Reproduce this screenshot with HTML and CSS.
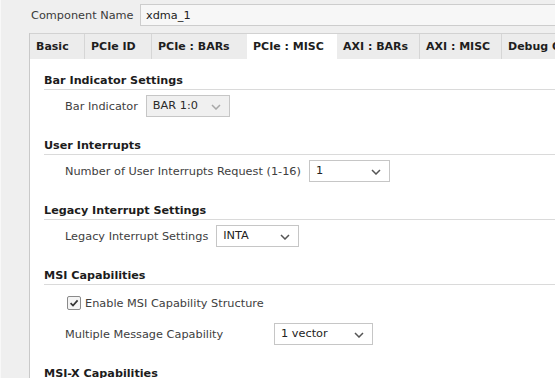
FILE: index.html
```html
<!DOCTYPE html>
<html>

<head>
    <title>xdma_1</title>
    <meta charset="utf-8" />
    <link rel="stylesheet" href="styles.css">
</head>

<body>

    <div class="nameRow">
        <label for="compName">Component Name</label>
        <input id="compName" type="text" value="xdma_1" />
    </div>

    <div class="tabContainer">
        <div class="tabBar">
            <div class="tab t1">Basic</div>
            <div class="tab t2">PCIe ID</div>
            <div class="tab t3">PCIe : BARs</div>
            <div class="tab t4 active">PCIe : MISC</div>
            <div class="tab t5">AXI : BARs</div>
            <div class="tab t6">AXI : MISC</div>
            <div class="tab t7">Debug Options</div>
        </div>

        <div class="panel">
            <div class="section">
                <div class="heading">Bar Indicator Settings</div>
                <div class="row">
                    <span class="label">Bar Indicator</span>
                    <div class="combo disabled w84">BAR 1:0<svg class="chev" width="10" height="6" viewBox="0 0 10 6"><path d="M1 1 L5 5 L9 1" /></svg></div>
                </div>
            </div>

            <div class="section">
                <div class="heading">User Interrupts</div>
                <div class="row">
                    <span class="label">Number of User Interrupts Request (1-16)</span>
                    <div class="combo w81">1<svg class="chev" width="10" height="6" viewBox="0 0 10 6"><path d="M1 1 L5 5 L9 1" /></svg></div>
                </div>
            </div>

            <div class="section">
                <div class="heading">Legacy Interrupt Settings</div>
                <div class="row">
                    <span class="label">Legacy Interrupt Settings</span>
                    <div class="combo w83">INTA<svg class="chev" width="10" height="6" viewBox="0 0 10 6"><path d="M1 1 L5 5 L9 1" /></svg></div>
                </div>
            </div>

            <div class="section">
                <div class="heading">MSI Capabilities</div>
                <div class="row check">
                    <span class="box">
                        <svg width="12" height="12" viewBox="0 0 12 12">
                            <path d="M2.6 6.2 L5 8.6 L9.6 3.4" fill="none" stroke="#333" stroke-width="1.7" />
                        </svg>
                    </span>
                    <span class="label">Enable MSI Capability Structure</span>
                </div>
                <div class="row">
                    <span class="label wide">Multiple Message Capability</span>
                    <div class="combo w99">1 vector<svg class="chev" width="10" height="6" viewBox="0 0 10 6"><path d="M1 1 L5 5 L9 1" /></svg></div>
                </div>
            </div>

            <div class="section">
                <div class="heading">MSI-X Capabilities</div>
            </div>
        </div>
    </div>

</body>

</html>
```

FILE: styles.css
```css
body {
    margin: 0;
    background-color: #efefef;
    font-family: "DejaVu Sans", sans-serif;
    font-size: 11.3px;
    color: #404040;
    width: 555px;
    height: 378px;
    overflow: hidden;
    border-left: 1px solid #f8f8f8;
    box-sizing: border-box;
}

div.nameRow {
    display: flex;
    align-items: center;
    height: 22px;
    padding: 4px 0 0 30px;
}

div.nameRow label {
    width: 109px;
    color: #3a3a3a;
}

div.nameRow input {
    flex: 1;
    height: 22px;
    box-sizing: border-box;
    margin: 0;
    padding: 0 5px;
    border: 1px solid #cdcdcd;
    border-right: none;
    background-color: #f7f7f7;
    font-family: "DejaVu Sans", sans-serif;
    font-size: 11.3px;
    color: #222;
    outline: none;
}

div.tabContainer {
    margin: 7px 0 0 28px;
    border-left: 1px solid #c9c9c9;
    height: 400px;
}

div.tabBar {
    display: flex;
    height: 25px;
    border-top: 1px solid #d2d2d2;
    background-color: #ececec;
    overflow: hidden;
}

div.tab {
    display: flex;
    align-items: center;
    box-sizing: border-box;
    padding-left: 6px;
    flex: none;
    font-weight: bold;
    font-size: 11px;
    color: #1e1e1e;
    border-right: 1px solid #d6d6d6;
    white-space: nowrap;
}

div.tab.active {
    background-color: #ffffff;
    border-right: none;
}

div.t1 { width: 55px; }
div.t2 { width: 67px; }
div.t3 { width: 95px; border-right: none; }
div.t4 { width: 90px; }
div.t5 { width: 83px; }
div.t6 { width: 82px; }
div.t7 { width: 80px; }

div.panel {
    background-color: #ffffff;
    padding: 14px 0 0 14px;
    height: 360px;
}

div.section {
    margin-bottom: 21px;
}

div.heading {
    line-height: 16px;
    font-weight: bold;
    font-size: 11.2px;
    color: #1c1c1c;
    border-bottom: 1px solid #dadada;
    margin-bottom: 5px;
}

div.row {
    display: flex;
    align-items: center;
    height: 22px;
    padding-left: 21px;
    margin-bottom: 9px;
}

div.section div.row:last-child {
    margin-bottom: 0;
}

div.row .label {
    margin-right: 8px;
    white-space: nowrap;
}

div.row .label.wide {
    width: 201px;
}

div.row.check {
    padding-left: 23px;
    margin-top: 8px;
    margin-bottom: 10px;
    height: 20px;
}

span.box {
    display: inline-flex;
    width: 12px;
    height: 12px;
    border: 1px solid #8a8a8a;
    border-radius: 2px;
    background-color: #f4f4f4;
    margin-right: 4px;
}

div.combo {
    position: relative;
    box-sizing: border-box;
    height: 22px;
    line-height: 20px;
    padding-left: 6px;
    border: 1px solid #c6c6c6;
    background-color: #ffffff;
    color: #222;
}

div.combo.disabled {
    background-color: #f0f0f0;
    color: #2a2a2a;
}

svg.chev {
    position: absolute;
    right: 8px;
    top: 8px;
}

svg.chev path {
    fill: none;
    stroke: #555;
    stroke-width: 1.5;
}

div.combo.disabled svg.chev path {
    stroke: #a8a8a8;
}

div.w84 { width: 84px; }
div.w81 { width: 81px; }
div.w83 { width: 83px; }
div.w99 { width: 99px; }
```
